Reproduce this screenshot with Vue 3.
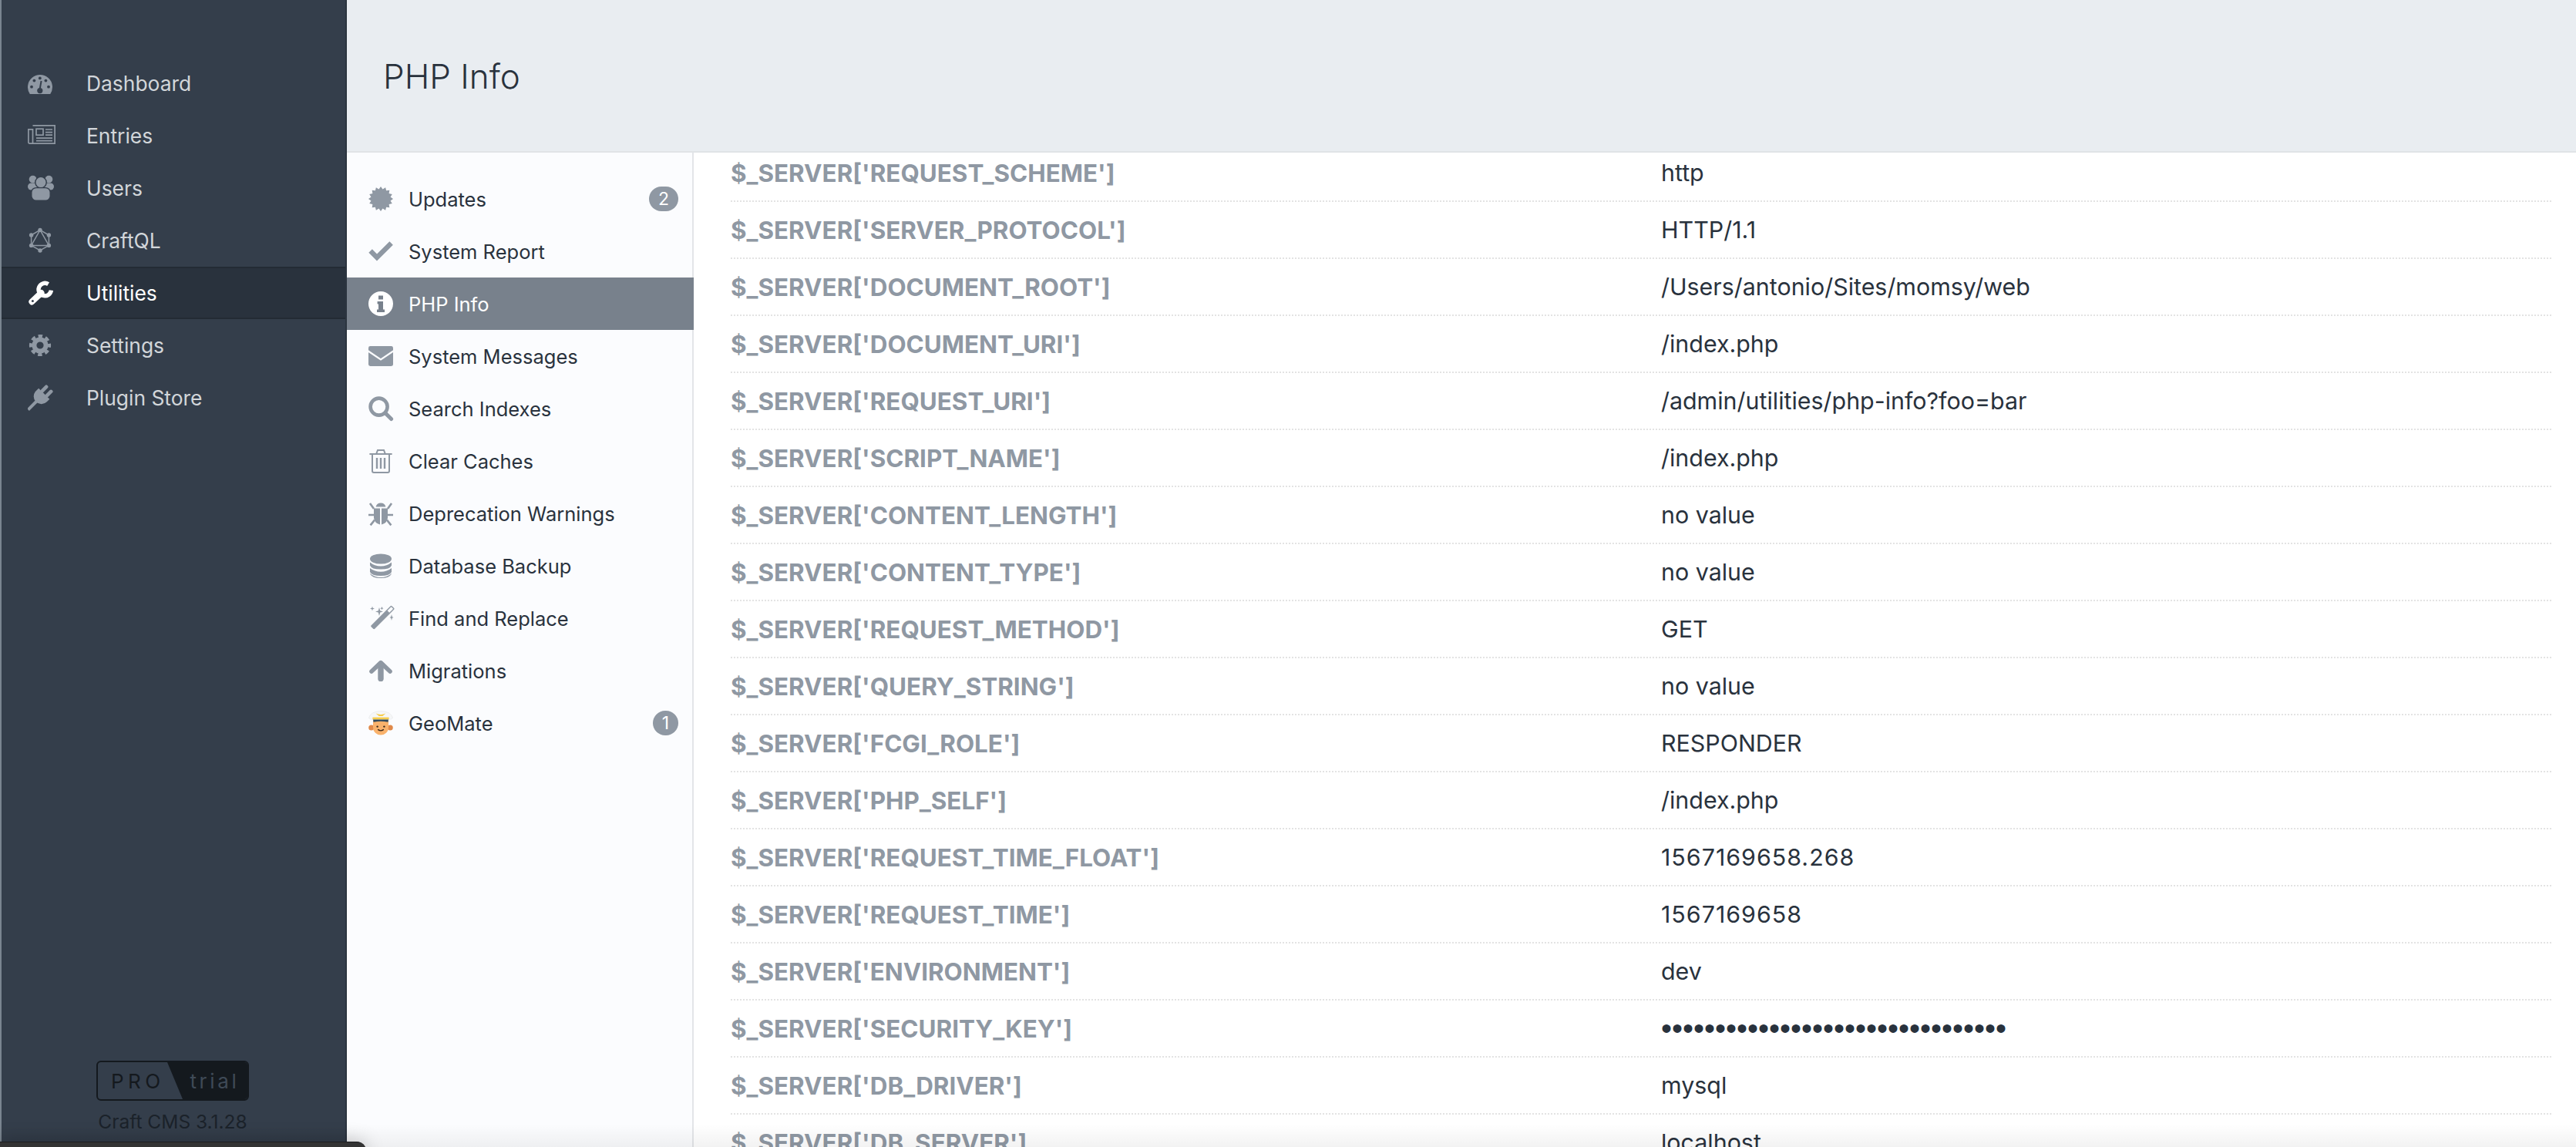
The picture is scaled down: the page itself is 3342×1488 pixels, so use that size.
<script setup>
const grey = '#8f98a3'
const dark = '#343e4b'
const pale = '#fbfcfe'

function burst() {
    const pts = []
    for (let i = 0; i < 32; i++) {
        const r = i % 2 ? 12.8 : 16
        const a = (i / 32) * Math.PI * 2
        pts.push(`${(16 + r * Math.cos(a)).toFixed(2)},${(16 + r * Math.sin(a)).toFixed(2)}`)
    }
    return pts.join(' ')
}

const mainNav = [
    {
        label: 'Dashboard',
        icon: `<path fill="${grey}" d="M2.8 32A16 16 0 1 1 29.2 32Z"/>
            <g fill="${dark}"><circle cx="5" cy="22.7" r="1.9"/><circle cx="8.4" cy="14.6" r="1.9"/><circle cx="15.8" cy="11.4" r="1.9"/><circle cx="23.4" cy="14.6" r="1.9"/><circle cx="27" cy="22.7" r="1.9"/><circle cx="15.8" cy="27.6" r="3.6"/></g>
            <path stroke="${dark}" stroke-width="2" d="M15.4 27L17.6 15"/>`
    },
    {
        label: 'Entries',
        icon: `<g fill="none" stroke="${grey}" stroke-width="1.7"><path d="M6.5 4.9H35.1V28.1H2.5Q.9 28.1.9 26.5V9.9H6.5V28"/><rect x="11" y="9.2" width="9" height="8"/><path d="M23 10H32M23 13.6H32M23 17.2H32M11 21.2H32M11 24.6H32"/></g>`
    },
    {
        label: 'Users',
        icon: `<g fill="${grey}"><circle cx="6.6" cy="6.6" r="4.9"/><circle cx="27.4" cy="6.6" r="4.9"/><rect x="0" y="11.5" width="13" height="9" rx="4.4"/><rect x="21" y="11.5" width="13" height="9" rx="4.4"/></g>
            <circle cx="17" cy="10.6" r="7.2" fill="${grey}" stroke="${dark}" stroke-width="1.4"/>
            <rect x="4.8" y="17.6" width="24.4" height="16.6" rx="6" fill="${grey}" stroke="${dark}" stroke-width="1.4"/>`
    },
    {
        label: 'CraftQL',
        icon: `<g fill="none" stroke="${grey}" stroke-width="1.5"><path d="M16 4.4L27.4 11V24.4L16 31L4.6 24.4V11Z"/><path d="M16 4.4L27.4 24.4H4.6Z"/></g>
            <g fill="${grey}"><circle cx="16" cy="4.4" r="2.7"/><circle cx="27.4" cy="11" r="2.7"/><circle cx="27.4" cy="24.4" r="2.7"/><circle cx="16" cy="31" r="2.7"/><circle cx="4.6" cy="24.4" r="2.7"/><circle cx="4.6" cy="11" r="2.7"/></g>`
    },
    {
        label: 'Utilities',
        active: true,
        icon: `<g fill="none" stroke="#fff" stroke-linecap="round"><path stroke-width="8" d="M5.4 29.4L17.5 18"/><path stroke-width="5.4" stroke-linecap="butt" d="M26.6 6.6A8.2 8.2 0 1 0 30.4 14.6"/></g><circle cx="6.4" cy="28.4" r="1.5" fill="${dark}"/>`
    },
    {
        label: 'Settings',
        icon: `<g fill="none" stroke="${grey}"><circle cx="16" cy="18" r="7.6" stroke-width="6"/><circle cx="16" cy="18" r="12" stroke-width="4.2" stroke-dasharray="5.4 4.02" stroke-dashoffset="2.7"/></g>`
    },
    {
        label: 'Plugin Store',
        icon: `<g fill="${grey}" transform="rotate(45 16 18)"><rect x="9.4" y="0" width="4.6" height="12" rx="2"/><rect x="18" y="0" width="4.6" height="12" rx="2"/><path d="M6 10.6H26V15.6A10 10 0 0 1 6 15.6Z"/><rect x="14" y="24" width="4" height="16"/></g>`
    }
]

const subNav = [
    { label: 'Updates', badge: 2, icon: `<polygon fill="${grey}" points="${burst()}"/>` },
    { label: 'System Report', icon: `<path fill="none" stroke="${grey}" stroke-width="6.4" d="M2.6 15.6L11 24L29.6 5.6"/>` },
    {
        label: 'PHP Info',
        active: true,
        icon: `<circle cx="16" cy="16" r="16" fill="#fff"/><path fill="#78818c" d="M13 5.4H19V10.6H13ZM11.6 13H19V23.4H21V27H11V23.4H13V16.4H11.6Z"/>`
    },
    {
        label: 'System Messages',
        icon: `<rect x="0" y="3" width="32" height="26" rx="2.4" fill="${grey}"/><path fill="none" stroke="${pale}" stroke-width="2.2" d="M-1 9L16 20.4L33 9"/>`
    },
    {
        label: 'Search Indexes',
        icon: `<g fill="none" stroke="${grey}"><circle cx="13.6" cy="13.6" r="11" stroke-width="4.6"/><path stroke-width="5" stroke-linecap="round" d="M22 22L29.6 29.6"/></g>`
    },
    {
        label: 'Clear Caches',
        icon: `<g fill="none" stroke="${grey}" stroke-width="2"><path d="M1.4 7H30.6"/><path d="M5 7V29Q5 31 7 31H25Q27 31 27 29V7"/><path d="M10.4 6.4L12 2H20L21.6 6.4"/></g><path stroke="${grey}" stroke-width="2.4" d="M11 12V26M16 12V26M21 12V26"/>`
    },
    {
        label: 'Deprecation Warnings',
        icon: `<path fill="${grey}" d="M9.6 7.4A6.6 6.6 0 0 1 22.4 7.4Z"/>
            <path fill="${grey}" d="M7 9.4H15V30.4Q8 29 7 22ZM17 9.4H25V22Q24 29 17 30.4Z"/>
            <path fill="none" stroke="${grey}" stroke-width="2.6" d="M2 3L7 10M30 3L25 10M0 18H7M32 18H25M2.6 31.4L8 24.6M29.4 31.4L24 24.6"/>`
    },
    {
        label: 'Database Backup',
        icon: `<g fill="${grey}"><ellipse cx="16" cy="7" rx="14" ry="6.6"/><path d="M2 11.4Q8 16.4 16 16.4T30 11.4V15.4Q28 20.6 16 20.6T2 15.4Z"/><path d="M2 19Q8 23.8 16 23.8T30 19V24Q28 29 16 29T2 24Z"/></g><path fill="${grey}" d="M2 26Q8 31 16 31T30 26V26.4Q27 32 16 32T2 26.4Z"/>`
    },
    {
        label: 'Find and Replace',
        icon: `<g transform="rotate(45 16.4 16.4)"><rect x="13.6" y="-5" width="6.4" height="38" rx="1.4" fill="${grey}"/><rect x="15" y="-3.6" width="3.6" height="7" fill="${pale}"/></g>
            <path fill="${grey}" d="M5 .5L5.7 2.8L8 3.5L5.7 4.2L5 6.5L4.3 4.2L2 3.5L4.3 2.8ZM14 2L15.2 6.2L19 7.4L15.2 8.6L14 13L12.8 8.6L9 7.4L12.8 6.2ZM17.4 1L18 2.6L19.6 3.2L18 3.8L17.4 5.4L16.8 3.8L15.2 3.2L16.8 2.6ZM30 11L30.8 14.2L32.6 15L30.8 15.8L30 19L29.2 15.8L27.4 15L29.2 14.2Z"/>`
    },
    {
        label: 'Migrations',
        icon: `<g fill="none" stroke="${grey}" stroke-linecap="round"><path stroke-width="7.4" d="M16 9V26.4"/><path stroke-width="5.6" stroke-linejoin="round" d="M4 17L16 5.6L28 17"/></g>`
    },
    {
        label: 'GeoMate',
        badge: 1,
        icon: `<circle cx="3.8" cy="22" r="3.6" fill="#e0894a"/><circle cx="28.2" cy="22" r="3.6" fill="#e0894a"/>
            <path fill="#f9b26c" d="M6 13H26V22A10 9.6 0 0 1 6 22Z"/>
            <path fill="#f6f7f8" stroke="#e4e6e8" stroke-width=".6" d="M.4 9.4Q3 .8 16 .6Q29 .8 31.6 9.4Q30 11.4 26 11.4H6Q2 11.4 .4 9.4Z"/>
            <path fill="#f7cd4b" d="M5.4 8.6H26.6V11.4H5.4Z"/><path fill="#f7cd4b" d="M9.6 3.6Q16 6.4 22.4 3.6L18.4 7H13.6Z"/>
            <path fill="#2f4a5f" d="M6 11.4H26L25.4 14.8Q16 12.6 6.6 14.8Z"/>
            <circle cx="11.6" cy="20.6" r="1.2" fill="#3b2a1c"/><circle cx="20.4" cy="20.6" r="1.2" fill="#3b2a1c"/>
            <path fill="none" stroke="#3b2a1c" stroke-width="1.4" stroke-linecap="round" d="M12.6 24.6Q16 27.2 19.4 24.6"/>`
    }
]

const rows = [
    { key: 'REQUEST_SCHEME', value: 'http' },
    { key: 'SERVER_PROTOCOL', value: 'HTTP/1.1' },
    { key: 'DOCUMENT_ROOT', value: '/Users/antonio/Sites/momsy/web' },
    { key: 'DOCUMENT_URI', value: '/index.php' },
    { key: 'REQUEST_URI', value: '/admin/utilities/php-info?foo=bar' },
    { key: 'SCRIPT_NAME', value: '/index.php' },
    { key: 'CONTENT_LENGTH', value: 'no value' },
    { key: 'CONTENT_TYPE', value: 'no value' },
    { key: 'REQUEST_METHOD', value: 'GET' },
    { key: 'QUERY_STRING', value: 'no value' },
    { key: 'FCGI_ROLE', value: 'RESPONDER' },
    { key: 'PHP_SELF', value: '/index.php' },
    { key: 'REQUEST_TIME_FLOAT', value: '1567169658.268', kind: 'number' },
    { key: 'REQUEST_TIME', value: '1567169658', kind: 'number' },
    { key: 'ENVIRONMENT', value: 'dev' },
    { key: 'SECURITY_KEY', value: '•'.repeat(32), kind: 'secret' },
    { key: 'DB_DRIVER', value: 'mysql' },
    { key: 'DB_SERVER', value: 'localhost' }
]
</script>

<template>
    <div class="app">
        <aside class="sidebar">
            <nav class="main-nav">
                <a v-for="item in mainNav" :key="item.label" class="main-item" :class="{ active: item.active }">
                    <svg class="main-icon" viewBox="0 0 36 36" v-html="item.icon"></svg>
                    <span>{{ item.label }}</span>
                </a>
            </nav>
            <div class="edition">
                <div class="edition-badge">
                    <span class="edition-name">PRO</span>
                    <span class="edition-trial">trial</span>
                </div>
                <div class="version">Craft CMS 3.1.28</div>
            </div>
        </aside>

        <main class="page">
            <header class="page-header">
                <h1>PHP Info</h1>
            </header>
            <div class="page-body">
                <nav class="sub-nav">
                    <a v-for="item in subNav" :key="item.label" class="sub-item" :class="{ active: item.active }">
                        <svg class="sub-icon" viewBox="0 0 32 32" v-html="item.icon"></svg>
                        <span class="sub-label">{{ item.label }}</span>
                        <span v-if="item.badge" class="badge">{{ item.badge }}</span>
                    </a>
                </nav>
                <section class="content">
                    <div class="info-table">
                        <div v-for="row in rows" :key="row.key" class="info-row">
                            <div class="info-key">$_SERVER['{{ row.key }}']</div>
                            <div class="info-value" :class="row.kind">{{ row.value }}</div>
                        </div>
                    </div>
                </section>
            </div>
        </main>

        <div class="bottom-shade"></div>
        <div class="window-edge"></div>
    </div>
</template>

<style>
html,
body {
    margin: 0;
    height: 100%;
    overflow: hidden;
}
</style>

<style scoped>
.app {
    position: relative;
    display: flex;
    width: 3342px;
    height: 1488px;
    overflow: hidden;
    font-family: Inter, "Noto Sans", sans-serif;
    font-size: 26px;
    color: #29323d;
}

.sidebar {
    box-sizing: border-box;
    flex: none;
    display: flex;
    flex-direction: column;
    justify-content: space-between;
    width: 450px;
    height: 100%;
    padding-top: 74px;
    background: #343e4b;
    border-left: 2px solid #7a8590;
    border-right: 2px solid #2b343f;
}

.main-item {
    box-sizing: border-box;
    display: flex;
    align-items: center;
    height: 68px;
    padding-left: 34px;
    font-size: 26.4px;
    color: #d2d6da;
}

.main-item.active {
    background: #29323d;
    border-top: 2px solid #232b34;
    border-bottom: 2px solid #232b34;
    color: #fff;
}

.main-icon {
    flex: none;
    width: 36px;
    height: 36px;
    margin-right: 40px;
}

.edition {
    display: flex;
    flex-direction: column;
    align-items: center;
    padding-bottom: 18px;
    margin-left: -2px;
}

.edition-badge {
    box-sizing: border-box;
    display: flex;
    align-items: center;
    width: 198px;
    height: 52px;
    border: 2px solid #14191e;
    border-radius: 6px;
    position: relative;
    overflow: hidden;
}

.edition-badge::before {
    content: "";
    position: absolute;
    inset: 0;
    background: #14191e;
    clip-path: polygon(90px 0, 100% 0, 100% 100%, 110px 100%);
}

.edition-name,
.edition-trial {
    position: relative;
    font-size: 26px;
}

.edition-name {
    margin-left: 17px;
    letter-spacing: 5.4px;
    color: #14191e;
}

.edition-trial {
    margin-left: 33px;
    letter-spacing: 3.6px;
    color: #3f4a57;
}

.version {
    margin-top: 12px;
    font-size: 24.5px;
    color: #1b222a;
    white-space: nowrap;
}

.page {
    flex: 1;
    display: flex;
    flex-direction: column;
    min-width: 0;
}

.page-header {
    box-sizing: border-box;
    flex: none;
    display: flex;
    align-items: center;
    height: 198px;
    padding: 2px 0 0 47px;
    background: #e9edf1;
    border-bottom: 2px solid #e0e3e6;
}

.page-header h1 {
    margin: 0;
    font-size: 44px;
    font-weight: 300;
    color: #29323d;
}

.page-body {
    flex: 1;
    display: flex;
    min-height: 0;
}

.sub-nav {
    flex: none;
    width: 448px;
    padding-top: 26px;
    background: #fbfcfe;
    border-right: 2px solid #e3e5e8;
}

.sub-item {
    display: flex;
    align-items: center;
    height: 68px;
    padding: 0 18px 0 28px;
    font-size: 25.5px;
}

.sub-item.active {
    position: relative;
    margin-right: -2px;
    padding-right: 20px;
    background: #78818c;
    color: #fff;
}

.sub-icon {
    flex: none;
    width: 32px;
    height: 32px;
    margin-right: 20px;
    overflow: visible;
}

.sub-label {
    flex: 1;
}

.badge {
    padding: 0 12px;
    height: 32px;
    border-radius: 16px;
    background: #8f98a3;
    color: #fff;
    font-size: 23px;
    line-height: 32px;
    text-align: center;
}

.content {
    flex: 1;
    min-width: 0;
    overflow: hidden;
    background: #fff;
    padding: 0 32px 0 48px;
}

.info-table {
    margin-top: -10px;
}

.info-row {
    box-sizing: border-box;
    display: flex;
    align-items: center;
    height: 74px;
    padding-bottom: 2px;
    background: linear-gradient(to right, #e3e3e3 50%, transparent 50%) left bottom / 4px 2px repeat-x;
}

.info-key {
    flex: none;
    width: 1207px;
    padding-top: 1px;
    font-size: 31.4px;
    font-weight: 700;
    color: #8f98a3;
}

.info-value {
    font-size: 30.4px;
    color: #29323d;
}

.info-value.number {
    letter-spacing: 1px;
}

.info-value.secret {
    font-family: "Liberation Sans", Arial, sans-serif;
    font-size: 40px;
    line-height: 40px;
}

.bottom-shade {
    position: absolute;
    left: 0;
    right: 0;
    bottom: 0;
    height: 30px;
    background: linear-gradient(to bottom, rgba(0, 0, 0, 0), rgba(0, 0, 0, 0.05));
    pointer-events: none;
}

.window-edge {
    position: absolute;
    left: 0;
    bottom: -10px;
    width: 475px;
    height: 16px;
    background: #333;
    border-top: 1px solid #1d1d1f;
    border-radius: 0 12px 0 0;
    box-shadow: 0 0 24px rgba(0, 0, 0, 0.25);
}
</style>
